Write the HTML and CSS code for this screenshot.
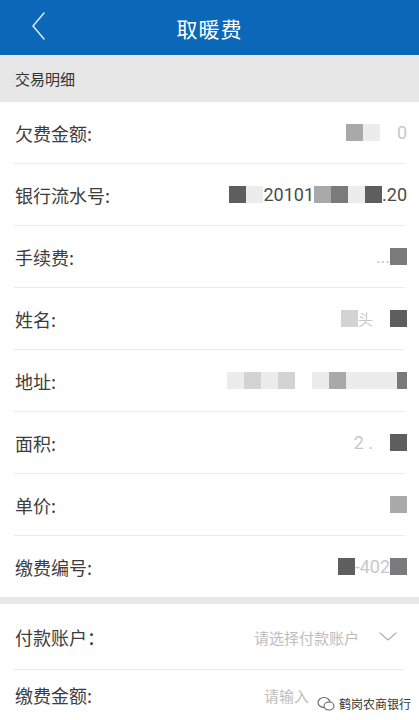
FILE: index.html
```html
<!DOCTYPE html>
<html lang="zh-CN">
  <head>
    <meta charset="UTF-8" />
    <title>取暖费</title>
    <link rel="stylesheet" href="styles.css">
  </head>
  <body>
    <header class="topbar">
      <button class="back" title="返回">
        <svg width="14" height="28" viewBox="0 0 14 28" fill="none" stroke="currentColor" stroke-width="1.6" stroke-linecap="round" stroke-linejoin="round">
          <polyline points="12,1 1,14 12,27" />
        </svg>
      </button>
      <div class="title">取暖费</div>
    </header>

    <div class="section-title">交易明细</div>

    <div class="list">
      <div class="row">
        <div class="label">欠费金额:</div>
        <div class="value">
          <span class="blk mid"></span><span class="blk pale"></span><span class="gap"></span><span class="faint">0</span>
        </div>
      </div>
      <div class="row">
        <div class="label">银行流水号:</div>
        <div class="value">
          <span class="blk dark"></span><span class="blk pale"></span>20101<span class="blk mid"></span><span class="blk dark2"></span><span class="blk pale"></span><span class="blk dark"></span>.20
        </div>
      </div>
      <div class="row">
        <div class="label">手续费:</div>
        <div class="value">
          <span class="faint">...</span><span class="blk dark2"></span>
        </div>
      </div>
      <div class="row">
        <div class="label">姓名:</div>
        <div class="value">
          <span class="blk light"></span><span class="faint small">头</span><span class="gap"></span><span class="blk dark"></span>
        </div>
      </div>
      <div class="row">
        <div class="label">地址:</div>
        <div class="value">
          <span class="blk pale"></span><span class="blk light"></span><span class="blk pale"></span><span class="blk light"></span><span class="gap"></span><span class="blk pale"></span><span class="blk mid"></span><span class="blk pale"></span><span class="blk pale"></span><span class="blk pale"></span><span class="blk dark2 thin"></span>
        </div>
      </div>
      <div class="row">
        <div class="label">面积:</div>
        <div class="value">
          <span class="faint">2 .</span><span class="gap"></span><span class="blk dark"></span>
        </div>
      </div>
      <div class="row">
        <div class="label">单价:</div>
        <div class="value">
          <span class="blk mid"></span>
        </div>
      </div>
      <div class="row last">
        <div class="label">缴费编号:</div>
        <div class="value">
          <span class="blk dark"></span><span class="faint">-402</span><span class="blk dark2"></span>
        </div>
      </div>
    </div>

    <div class="split"></div>

    <div class="list form">
      <div class="row pick">
        <div class="label">付款账户：</div>
        <div class="value hint">
          请选择付款账户
          <svg class="caret" width="18" height="10" viewBox="0 0 18 10" fill="none" stroke="currentColor" stroke-width="1.2" stroke-linecap="round" stroke-linejoin="round">
            <polyline points="1,1 9,8 17,1" />
          </svg>
        </div>
      </div>
      <div class="row last">
        <div class="label">缴费金额:</div>
        <div class="value hint">请输入</div>
      </div>
    </div>

    <div class="watermark">
      <svg width="18" height="16" viewBox="0 0 18 16" fill="none" stroke="#666" stroke-width="1.1">
        <ellipse cx="7" cy="6.5" rx="6" ry="5" />
        <ellipse cx="12" cy="10" rx="5" ry="4" fill="#fff" />
      </svg>
      鹤岗农商银行
    </div>
  </body>
</html>
```

FILE: styles.css
```css
html,
body {
  margin: 0;
  padding: 0;
}
body {
  font-family: "Noto Sans CJK SC", "Noto Sans", sans-serif;
  background: #fff;
  color: #333;
  width: 419px;
  height: 720px;
  overflow: hidden;
  position: relative;
}
button {
  background: transparent;
  border: none;
  cursor: pointer;
  padding: 0;
}

.topbar {
  height: 55px;
  background: #0b67b8;
  display: flex;
  align-items: center;
  justify-content: center;
  position: relative;
}
.back {
  position: absolute;
  left: 32px;
  top: 12px;
  color: #d6e6f5;
  display: flex;
}
.title {
  color: #fff;
  font-size: 21px;
  letter-spacing: 1px;
}

.section-title {
  height: 47px;
  background: #e7e7e7;
  display: flex;
  align-items: center;
  padding-left: 15px;
  font-size: 15px;
  color: #333;
}

.list {
  padding: 0 14px;
}
.row {
  height: 61px;
  border-bottom: 1px solid #ebebeb;
  display: flex;
  align-items: center;
  justify-content: space-between;
}
.row.last {
  border-bottom: none;
}
.label {
  font-size: 18px;
  color: #3d3d3d;
  padding-left: 1px;
}
.value {
  display: flex;
  align-items: center;
  font-family: Roboto, "Noto Sans CJK SC", sans-serif;
  font-size: 18px;
  color: #4a4a4a;
  margin-right: -2px;
}

/* mosaic blocks over the hidden data */
.blk {
  display: inline-block;
  width: 17px;
  height: 17px;
  background: #bdbdbd;
}
.blk.pale {
  background: #ececec;
}
.blk.light {
  background: #d3d3d3;
}
.blk.mid {
  background: #a9a9a9;
}
.blk.dark2 {
  background: #7a7a7a;
}
.blk.dark {
  background: #5e5e5e;
}
.blk.thin {
  width: 10px;
}
.gap {
  display: inline-block;
  width: 17px;
}
.faint {
  color: #c8c8c8;
}
.faint.small {
  font-size: 15px;
  font-family: "Noto Sans CJK SC", sans-serif;
}

.split {
  height: 7px;
  background: #e8e8e8;
}

.form .row.pick {
  height: 64px;
  padding-top: 1px;
}
.form .row.last {
  height: 50px;
}
.form .row.last .value {
  margin-right: 96px;
}
.hint {
  font-family: "Noto Sans CJK SC", sans-serif;
  font-size: 15px;
  color: #bdbdbd;
}
.caret {
  margin-left: 20px;
  margin-right: 10px;
  color: #b0b0b0;
}

.watermark {
  position: absolute;
  right: 8px;
  bottom: 8px;
  display: flex;
  align-items: center;
  gap: 4px;
  font-size: 12px;
  color: #333;
}
```
